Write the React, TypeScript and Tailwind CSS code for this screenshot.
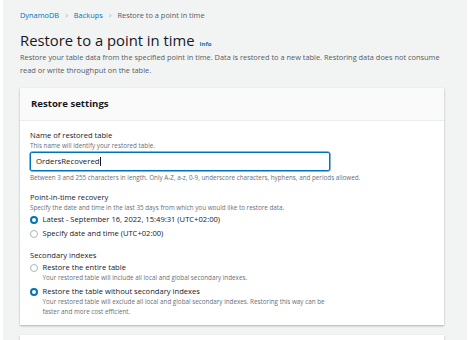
import React from "react";

const font = { fontFamily: '"Open Sans", "Noto Sans", Arial, sans-serif' };

const Radio = ({ checked }: { checked: boolean }) =>
  checked ? (
    <span className="mt-[2.5px] w-[8px] h-[8px] rounded-full border-[2.5px] border-[#0073bb] bg-white shrink-0" />
  ) : (
    <span className="mt-[2.5px] w-[8px] h-[8px] rounded-full border border-[#aab7b8] bg-white shrink-0" />
  );

const RadioRow = ({
  checked,
  label,
  desc,
}: {
  checked: boolean;
  label: string;
  desc?: string[];
}) => (
  <div className="flex items-start gap-[4.5px]">
    <Radio checked={checked} />
    <div>
      <div className="text-[7.6px] leading-[13px] text-[#16191f]">{label}</div>
      {desc && (
        <div className="text-[6.3px] leading-[9.5px] text-[#687078] -mt-[1px]">
          {desc.map((d) => (
            <div key={d}>{d}</div>
          ))}
        </div>
      )}
    </div>
  </div>
);

export default function App() {
  return (
    <div className="w-[474px] h-[340px] bg-white overflow-hidden" style={font}>
      <div className="ml-[3px] w-[464px] h-[340px] bg-[#f2f3f3] pl-[17px] pt-[9px]">
        {/* breadcrumb */}
        <div className="flex items-center gap-[6px] text-[7.4px] leading-[12px]">
          <span className="text-[#0073bb]">DynamoDB</span>
          <span className="text-[#aab7b8] text-[9px]">›</span>
          <span className="text-[#0073bb]">Backups</span>
          <span className="text-[#aab7b8] text-[9px]">›</span>
          <span className="text-[#545b64]">Restore to a point in time</span>
        </div>

        {/* title */}
        <div className="mt-[9px] flex items-baseline gap-[5px]">
          <h1 className="text-[14.8px] leading-[20px] text-[#16191f]">
            Restore to a point in time
          </h1>
          <span className="text-[6px] font-bold text-[#0073bb]">Info</span>
        </div>
        <p className="mt-[1px] w-[420px] text-[7.4px] leading-[13px] text-[#545b64]">
          Restore your table data from the specified point in time. Data is
          restored to a new table. Restoring data does not consume read or write
          throughput on the table.
        </p>

        {/* card */}
        <div className="mt-[11px] w-[424px] bg-white shadow-[0_1px_2px_rgba(0,28,36,0.3)]">
          <div className="h-[33px] flex items-center px-[11px] pt-[1px] bg-[#fafafa] border-b border-[#eaeded]">
            <h2 className="text-[9.6px] font-bold text-[#16191f]">
              Restore settings
            </h2>
          </div>
          <div className="px-[10px] pt-[9px] pb-[9px]">
            <div className="text-[7.6px] leading-[11px] text-[#16191f]">
              Name of restored table
            </div>
            <div className="text-[6.3px] leading-[9px] text-[#687078]">
              This name will identify your restored table.
            </div>
            <div className="mt-[2px] w-[300px] h-[19px] border border-[#0073bb] rounded-[2px] flex items-center px-[5px] text-[7.8px] text-[#16191f] shadow-[0_0_0_0.5px_#0073bb]">
              OrdersRecovered
              <span className="w-px h-[9px] bg-[#16191f]" />
            </div>
            <div className="mt-[2px] text-[6.3px] leading-[9px] text-[#687078]">
              Between 3 and 255 characters in length. Only A-Z, a-z, 0-9,
              underscore characters, hyphens, and periods allowed.
            </div>

            <div className="mt-[9.5px] text-[7.6px] leading-[11px] text-[#16191f]">
              Point-in-time recovery
            </div>
            <div className="text-[6.3px] leading-[9px] text-[#687078]">
              Specify the date and time in the last 35 days from which you would
              like to restore data.
            </div>
            <div className="mt-[1.5px] flex flex-col gap-[1px]">
              <RadioRow
                checked
                label="Latest - September 16, 2022, 15:49:31 (UTC+02:00)"
              />
              <RadioRow checked={false} label="Specify date and time (UTC+02:00)" />
            </div>

            <div className="mt-[9.5px] text-[7.6px] leading-[11px] text-[#16191f]">
              Secondary indexes
            </div>
            <div className="mt-[0.5px] flex flex-col gap-[2.5px]">
              <RadioRow
                checked={false}
                label="Restore the entire table"
                desc={[
                  "Your restored table will include all local and global secondary indexes.",
                ]}
              />
              <RadioRow
                checked
                label="Restore the table without secondary indexes"
                desc={[
                  "Your restored table will exclude all local and global secondary indexes. Restoring this way can be",
                  "faster and more cost efficient.",
                ]}
              />
            </div>
          </div>
        </div>

        <div className="mt-[10px] w-[424px] h-[20px] bg-white shadow-[0_1px_2px_rgba(0,28,36,0.3)]" />
      </div>
    </div>
  );
}
